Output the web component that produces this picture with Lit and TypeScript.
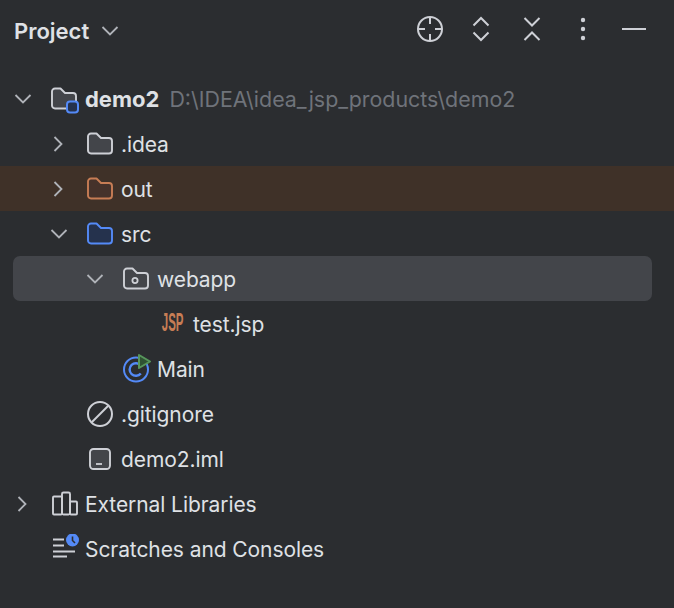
import { LitElement, html, css, svg } from "lit";
import { customElement } from "lit/decorators.js";

const S = "#ced0d6";
const folder = (stroke: string, fill: string, extra: unknown = null) => html`<svg width="30" height="30" viewBox="0 0 30 30" fill="none">
  <path d="M3 7.500a3 3 0 0 1 3-3h5.500l4.500 4.500h8a3 3 0 0 1 3 3v9.500a3 3 0 0 1-3 3H6a3 3 0 0 1-3-3Z" fill="${fill}" stroke="${stroke}" stroke-width="1.9" stroke-linejoin="round"/>${extra}</svg>`;

const icons: Record<string, unknown> = {
  module: folder(S, "#43454a", svg`<rect x="18" y="17.500" width="11" height="11" rx="3" fill="#25324d" stroke="#548af7" stroke-width="2"/>`),
  plain: folder(S, "#43454a"),
  out: folder("#c77d55", "#45322b"),
  src: folder("#548af7", "#25324d"),
  web: folder(S, "none", svg`<circle cx="14" cy="16.500" r="2.600" stroke="${S}" stroke-width="1.800"/>`),
  jsp: html`<span class="jsp">JSP</span>`,
  main: html`<svg width="30" height="30" viewBox="0 0 30 30" fill="none">
    <circle cx="15" cy="15.500" r="12" stroke="#548af7" stroke-width="2"/>
    <path d="M19.800 11.500a6.300 6.300 0 1 0 0 8" stroke="#548af7" stroke-width="2.400"/>
    <path d="M18 1l11 6.500L18 14Z" fill="#2f5233" stroke="#57965c" stroke-width="2" stroke-linejoin="round"/></svg>`,
  ignore: html`<svg width="30" height="30" viewBox="0 0 30 30" fill="none">
    <circle cx="15" cy="15" r="12" stroke="${S}" stroke-width="2"/><path d="M7 23 23 7" stroke="${S}" stroke-width="2"/></svg>`,
  iml: html`<svg width="30" height="30" viewBox="0 0 30 30" fill="none">
    <rect x="5" y="5" width="20" height="20" rx="3.500" fill="#43454a" stroke="${S}" stroke-width="1.900"/><path d="M11 20h6" stroke="${S}" stroke-width="1.800"/></svg>`,
  lib: html`<svg width="30" height="30" viewBox="0 0 30 30" fill="none" stroke="${S}" stroke-width="1.900" stroke-linejoin="round">
    <rect x="4" y="7.500" width="9" height="18" rx="1"/><rect x="13" y="3.500" width="8" height="22" rx="1.500"/><rect x="21" y="12.500" width="7" height="13" rx="1"/></svg>`,
  scratch: html`<svg width="30" height="30" viewBox="0 0 30 30" fill="none">
    <path d="M4 5.500h11M4 11.500h11M4 17.500h22M4 22.500h14" stroke="${S}" stroke-width="1.900"/>
    <circle cx="23.500" cy="6" r="6.500" fill="#548af7"/><path d="M23.500 2.500v4l2.500 2.500" stroke="#2b2d30" stroke-width="1.600"/></svg>`,
};

const chev = (open: boolean) => html`<svg class="chev" width="18" height="18" viewBox="0 0 18 18" fill="none" stroke="#b0b3b9" stroke-width="1.800">
  <path d="${open ? "M1.500 5 9 12.500 16.500 5" : "M4.500 2 11.500 9l-7 7"}"/></svg>`;

type Row = { d: number; icon: string; label: string; open?: boolean; hint?: string; bold?: boolean; cls?: string };
const rows: Row[] = [
  { d: 0, icon: "module", label: "demo2", open: true, bold: true, hint: "D:\\IDEA\\idea_jsp_products\\demo2" },
  { d: 1, icon: "plain", label: ".idea", open: false },
  { d: 1, icon: "out", label: "out", open: false, cls: "excluded" },
  { d: 1, icon: "src", label: "src", open: true },
  { d: 2, icon: "web", label: "webapp", open: true, cls: "selected" },
  { d: 3, icon: "jsp", label: "test.jsp" },
  { d: 2, icon: "main", label: "Main" },
  { d: 1, icon: "ignore", label: ".gitignore" },
  { d: 1, icon: "iml", label: "demo2.iml" },
  { d: 0, icon: "lib", label: "External Libraries", open: false },
  { d: 0, icon: "scratch", label: "Scratches and Consoles" },
];

@customElement("app-root")
export class AppRoot extends LitElement {
  static styles = css`
    :host { display: block; width: 674px; height: 608px; background: #2b2d30; overflow: hidden;
      font-family: "Inter", "Noto Sans", sans-serif; font-size: 21px; color: #dfe1e5; }
    .header { display: flex; align-items: center; height: 62px; padding: 0 15px 0 14px; }
    .title { font-weight: 600; font-size: 22px; }
    .drop { margin-left: 12px; display: flex; }
    .tools { margin-left: auto; display: flex; align-items: center; margin-top: -4px; }
    .tool { width: 51px; display: flex; justify-content: center; }
    .tool svg { display: block; }
    .tree { padding-top: 14px; display: flex; flex-direction: column; }
    .row { display: flex; align-items: center; height: 45px; white-space: nowrap; }
    .excluded { background: #3f3128; }
    .selected { background: #43454a; margin: 0 22px 0 13px; border-radius: 7px; }
    .twist { width: 18px; height: 18px; margin-right: 17px; flex: none; }
    .chev { display: block; }
    .icon { width: 30px; height: 30px; display: flex; align-items: center; justify-content: center; margin-right: 6px; flex: none; }
    .label { padding-top: 2px; letter-spacing: -0.08px; }
    .label.bold { font-weight: 700; font-size: 22px; padding-top: 0; letter-spacing: 0; }
    .hint { color: #6f737a; margin-left: 10px; font-size: 21.400px; }
    .jsp { font-family: "Liberation Sans", sans-serif; font-size: 25px; font-weight: 700; color: #c77d55; transform: scaleX(.46); margin-left: 2px; margin-top: -2px; }
  `;

  render() {
    return html`
      <div class="header">
        <span class="title">Project</span>
        <span class="drop">${chev(true)}</span>
        <div class="tools">
          <span class="tool"><svg width="28" height="28" viewBox="0 0 28 28" fill="none" stroke="${S}" stroke-width="2">
            <circle cx="14" cy="14" r="12"/><path d="M14 2v7M14 19v7M2 14h7M19 14h7"/></svg></span>
          <span class="tool"><svg width="18" height="26" viewBox="0 0 18 26" fill="none" stroke="${S}" stroke-width="2">
            <path d="M1.500 9.500 9 2l7.500 7.500M1.500 16.500 9 24l7.500-7.500"/></svg></span>
          <span class="tool"><svg width="18" height="26" viewBox="0 0 18 26" fill="none" stroke="${S}" stroke-width="2">
            <path d="M1.500 2 9 9.500 16.500 2M1.500 24 9 16.500 16.500 24"/></svg></span>
          <span class="tool"><svg width="8" height="26" viewBox="0 0 8 26" fill="${S}">
            <circle cx="4" cy="4" r="2.200"/><circle cx="4" cy="13" r="2.200"/><circle cx="4" cy="22" r="2.200"/></svg></span>
          <span class="tool"><svg width="26" height="4" viewBox="0 0 26 4" stroke="${S}" stroke-width="2"><path d="M1 2h24"/></svg></span>
        </div>
      </div>
      <div class="tree">
        ${rows.map((r) => {
          const base = 14 + r.d * 36 - (r.cls === "selected" ? 13 : 0);
          return html`<div class="row ${r.cls ?? ""}" style="padding-left:${base}px">
            <span class="twist">${r.open === undefined ? null : chev(r.open)}</span>
            <span class="icon">${icons[r.icon]}</span>
            <span class="label ${r.bold ? "bold" : ""}">${r.label}</span>
            ${r.hint ? html`<span class="hint">${r.hint}</span>` : null}
          </div>`;
        })}
      </div>
    `;
  }
}
